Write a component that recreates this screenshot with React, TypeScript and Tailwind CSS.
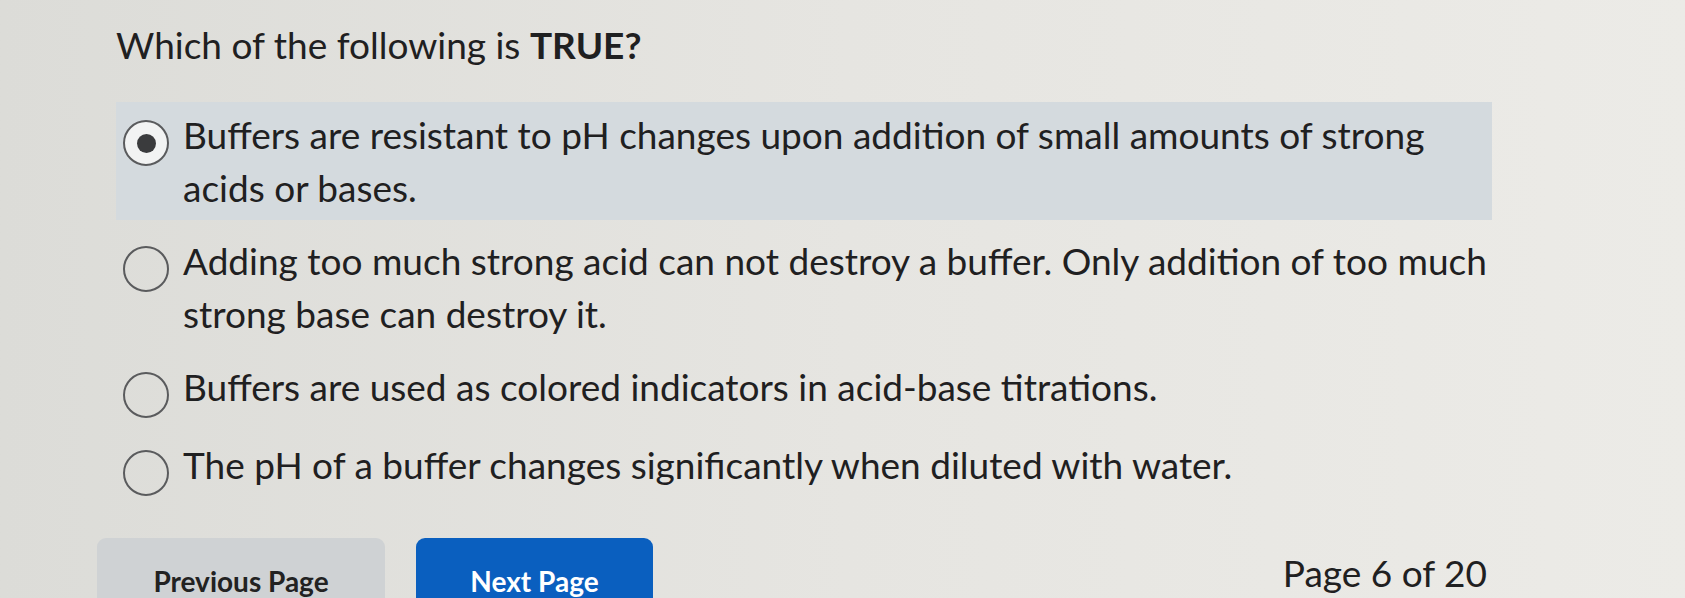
import { useState } from "react";

const options = [
  "Buffers are resistant to pH changes upon addition of small amounts of strong acids or bases.",
  "Adding too much strong acid can not destroy a buffer. Only addition of too much strong base can destroy it.",
  "Buffers are used as colored indicators in acid-base titrations.",
  "The pH of a buffer changes significantly when diluted with water.",
];

function Radio({ checked }: { checked: boolean }) {
  return (
    <span
      className={
        "mt-[12px] flex h-[46px] w-[46px] shrink-0 items-center justify-center rounded-full border-2 border-[#5a5b5d] " +
        (checked ? "bg-[#f2f3f3]" : "bg-transparent")
      }
    >
      {checked && <span className="h-[19px] w-[19px] rounded-full bg-[#3a3b3d]" />}
    </span>
  );
}

export default function App() {
  const [selected, setSelected] = useState(0);

  return (
    <div className="min-h-screen w-full overflow-hidden bg-gradient-to-r from-[#dcdcd8] via-[#e6e5e1] to-[#ecebe7] font-['Lato',sans-serif] text-[#1f2021]">
      <div className="pl-[116px] pt-[21px]">
        <h1 className="text-[37px] leading-[48px]">
          Which of the following is <span className="font-bold">TRUE?</span>
        </h1>

        {/* answer choices */}
        <div className="mt-[33px] flex w-[1376px] flex-col gap-[8px]">
          {options.map((text, i) => (
            <label
              key={i}
              onClick={() => setSelected(i)}
              className={
                "flex cursor-pointer items-start gap-[14px] py-[6px] pl-[7px] " +
                (selected === i ? "bg-[#d4dade]" : "")
              }
            >
              <Radio checked={selected === i} />
              <span className="text-[37px] leading-[53px]">{text}</span>
            </label>
          ))}
        </div>

        {/* pager */}
        <div className="-ml-[19px] mt-[36px] flex items-start">
          <button className="h-[70px] w-[288px] rounded-t-[9px] bg-[#cfd2d4] pt-[16px] text-[28px] leading-[34px] font-bold text-[#222]">
            Previous Page
          </button>
          <button className="ml-[31px] h-[70px] w-[237px] rounded-t-[9px] bg-[#0a5fbf] pt-[16px] text-[28px] leading-[34px] font-bold text-white">
            Next Page
          </button>
          <div className="ml-auto mr-[198px] pt-[13px] text-[37px] leading-[44px]">Page 6 of 20</div>
        </div>
      </div>
    </div>
  );
}
